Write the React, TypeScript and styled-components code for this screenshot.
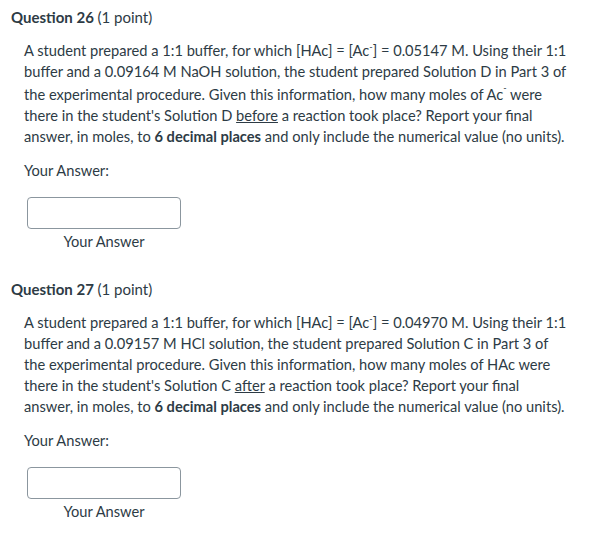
import styled, { createGlobalStyle } from "styled-components";

const GlobalStyle = createGlobalStyle`
  body {
    margin: 0;
    background: #ffffff;
    font-family: Lato, "Open Sans", sans-serif;
    color: #2d3b45;
  }
`;

const Page = styled.div`
  padding: 7px 0 0 11px;
  width: 603px;
`;

const Question = styled.section`
  margin-bottom: 28px;
`;

const Heading = styled.h3`
  margin: 0;
  font-size: 15px;
  line-height: 20px;
  font-weight: 700;
  color: #2d3b45;
`;

const Points = styled.span`
  font-weight: 400;
`;

const Body = styled.div`
  padding-left: 13px;
  padding-top: 13px;
`;

const Text = styled.p`
  margin: 0;
  width: 545px;
  font-size: 14.67px;
  line-height: 21px;
`;

const Sup = styled.sup<{ $tall?: boolean }>`
  font-size: 9px;
  line-height: ${(p) => (p.$tall ? "normal" : "0")};
  vertical-align: ${(p) => (p.$tall ? "9px" : "super")};
`;

const Underline = styled.span`
  text-decoration: underline;
`;

const Label = styled.div`
  margin-top: 13px;
  font-size: 14.67px;
  line-height: 21px;
`;

const AnswerBox = styled.div`
  margin-top: 16px;
  margin-left: 3px;
  width: 154px;
  display: flex;
  flex-direction: column;
  align-items: center;
`;

const Input = styled.input`
  box-sizing: border-box;
  width: 154px;
  height: 32px;
  border: 1px solid #8b969e;
  border-radius: 4px;
  background: #fff;
  font-family: inherit;
  font-size: 14px;
  outline: none;
`;

const Caption = styled.span`
  margin-top: 4px;
  font-size: 14.67px;
  line-height: 18px;
`;

type QuestionProps = {
  num: number;
  children: React.ReactNode;
};

function QuestionBlock({ num, children }: QuestionProps) {
  return (
    <Question>
      <Heading>
        Question {num} <Points>(1 point)</Points>
      </Heading>
      <Body>
        <Text>{children}</Text>
        <Label>Your Answer:</Label>
        <AnswerBox>
          <Input type="text" />
          <Caption>Your Answer</Caption>
        </AnswerBox>
      </Body>
    </Question>
  );
}

export default function App() {
  return (
    <Page>
      <GlobalStyle />
      <QuestionBlock num={26}>
        A student prepared a 1:1 buffer, for which [HAc] = [Ac<Sup>-</Sup>] =
        0.05147 M. Using their 1:1 buffer and a 0.09164 M NaOH solution, the
        student prepared Solution D in Part 3 of the experimental procedure.
        Given this information, how many moles of Ac<Sup $tall>-</Sup> were
        there in the student's Solution D <Underline>before</Underline> a
        reaction took place? Report your final answer, in moles, to{" "}
        <b>6 decimal places</b> and only include the numerical value (no
        units).
      </QuestionBlock>
      <QuestionBlock num={27}>
        A student prepared a 1:1 buffer, for which [HAc] = [Ac<Sup>-</Sup>] =
        0.04970 M. Using their 1:1 buffer and a 0.09157 M HCl solution, the
        student prepared Solution C in Part 3 of the experimental procedure.
        Given this information, how many moles of HAc were there in the
        student's Solution C <Underline>after</Underline> a reaction took
        place? Report your final answer, in moles, to{" "}
        <b>6 decimal places</b> and only include the numerical value (no
        units).
      </QuestionBlock>
    </Page>
  );
}
